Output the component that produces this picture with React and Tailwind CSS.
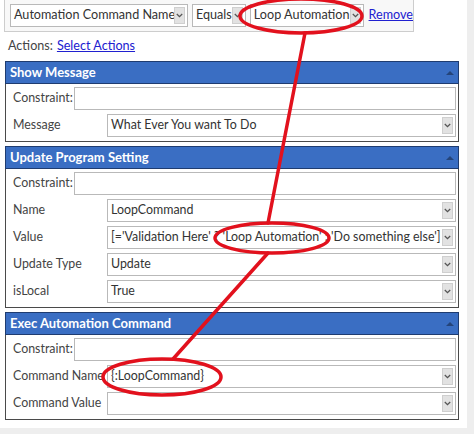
import React from "react";

function Chevron() {
  return (
    <div className="self-stretch my-[2px] mr-[2px] w-[11px] bg-[#e2e2e2] border border-[#cfcfcf] flex items-center justify-center shrink-0">
      <svg width="7" height="5" viewBox="0 0 7 5">
        <path d="M0.8 1 L3.5 3.6 L6.2 1" fill="none" stroke="#555" strokeWidth="1.3" />
      </svg>
    </div>
  );
}

function Select({ value, className = "" }) {
  return (
    <div className={"h-[23px] bg-white border border-[#b9b9b9] flex items-center " + className}>
      <div className="flex-1 min-w-0 pl-[3px] text-[#333] whitespace-nowrap overflow-hidden">{value}</div>
      <Chevron />
    </div>
  );
}

function Input() {
  return <div className="h-[23px] flex-1 bg-white border border-[#b9b9b9]" />;
}

function Row({ label, value }) {
  return (
    <div className="flex items-center h-[23px]">
      <div className="w-[94px] text-[#444] whitespace-nowrap shrink-0">{label}</div>
      <Select value={value} className="flex-1 min-w-0" />
    </div>
  );
}

function ConstraintRow() {
  return (
    <div className="flex items-center h-[23px]">
      <div className="w-[61px] text-[#444] whitespace-nowrap shrink-0">Constraint:</div>
      <Input />
    </div>
  );
}

function Panel({ title, children }) {
  return (
    <div className="flex flex-col">
      <div className="h-[23px] bg-[#3a6ec3] border border-[#1f3c70] flex items-center justify-between pl-[4px] pr-[4px]">
        <span className="text-white font-bold text-[13px]">{title}</span>
        <div className="w-0 h-0 border-l-[4px] border-r-[4px] border-b-[4px] border-l-transparent border-r-transparent border-b-[#24447a]" />
      </div>
      <div className="border-x-[1.5px] border-b-[1.5px] border-[#4a4a4a] bg-white pl-[7px] pr-[2px] pt-[3px] pb-[4px] flex flex-col gap-[4px]">
        {children}
      </div>
    </div>
  );
}

export default function App() {
  return (
    <div
      className="relative w-[474px] h-[434px] bg-[#eeeeee] overflow-hidden text-[12.4px]"
      style={{ fontFamily: "Lato, 'Open Sans', sans-serif" }}
    >
      <div className="w-[467px] h-[428px] bg-white">
        <div className="ml-[4px] w-[410px] h-[32px] bg-[#f8f8f8] border-x border-b border-[#cdcdcd] flex items-start pt-[4px] pl-[5px] gap-[4px] text-[12.6px]">
          <Select value="Automation Command Name" className="w-[178px]" />
          <Select value="Equals" className="w-[54px]" />
          <Select value="Loop Automation" className="w-[114px]" />
          <a className="ml-[1px] text-[#2020d0] underline leading-[22px]">Remove</a>
        </div>
        <div className="h-[29px] pl-[8px] flex items-center text-[#444] text-[12.6px]">
          <span>Actions:</span>
          <a className="ml-[4px] text-[#2020d0] underline">Select Actions</a>
        </div>
        <div className="ml-[5px] w-[454px] flex flex-col gap-[4px]">
          <Panel title="Show Message">
            <ConstraintRow />
            <Row label="Message" value="What Ever You want To Do" />
          </Panel>
          <Panel title="Update Program Setting">
            <ConstraintRow />
            <Row label="Name" value="LoopCommand" />
            <Row label="Value" value="[='Validation Here' ? 'Loop Automation' : 'Do something else']" />
            <Row label="Update Type" value="Update" />
            <Row label="isLocal" value="True" />
          </Panel>
          <Panel title="Exec Automation Command">
            <ConstraintRow />
            <Row label="Command Name" value="{:LoopCommand}" />
            <Row label="Command Value" value="" />
          </Panel>
        </div>
      </div>
      <svg className="absolute inset-0 pointer-events-none" width="474" height="434" viewBox="0 0 474 434">
        <g fill="none" stroke="#e2111d" strokeWidth="3.5" strokeLinecap="round">
          <ellipse cx="301" cy="16" rx="61" ry="17" />
          <line x1="305" y1="33" x2="268" y2="223" />
          <ellipse cx="272" cy="238" rx="57" ry="15" />
          <line x1="268" y1="253" x2="173" y2="359" />
          <ellipse cx="162" cy="377" rx="59" ry="18" />
        </g>
      </svg>
    </div>
  );
}
